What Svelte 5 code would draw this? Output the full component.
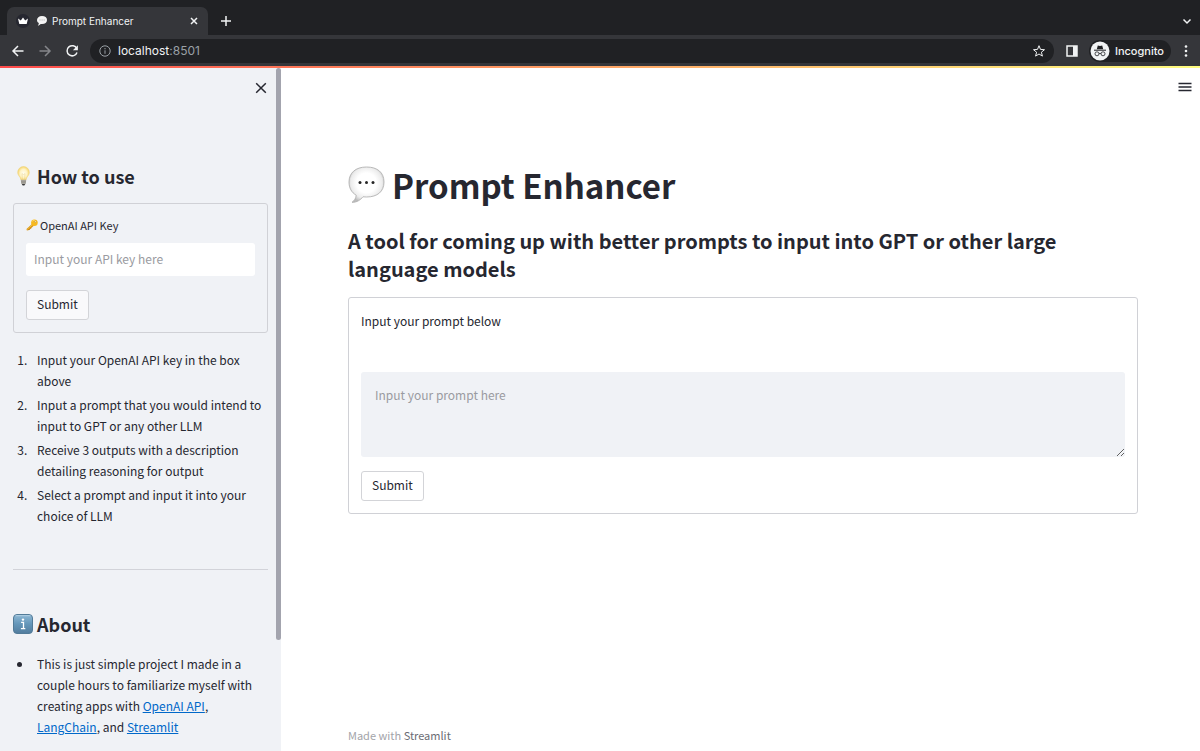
<div class="browser">
	<div class="tabs">
		<div class="tab">
			<svg class="crown" viewBox="0 0 14 14" width="14" height="14" aria-hidden="true">
				<circle cx="7" cy="7" r="7" fill="#262730" />
				<path d="M2 4.6 4.8 6.6 7 3.5 9.2 6.6 12 4.6 10.7 10H3.3z" fill="#fff" />
			</svg>
			<svg class="tab-bubble" viewBox="0 0 12 12" width="12" height="12" aria-hidden="true">
				<path
					d="M6 1C3 1 1 2.7 1 5c0 1.500.7 2.500 1.800 3.100C2.800 9.300 2.400 10 1.800 10.600 3 10.600 4 9.800 4.700 9H6c3 0 5-1.600 5-4S9 1 6 1z"
					fill="#f4f4f4"
				/>
				<path d="M3.500 5h1M5.600 5h1M7.700 5h1" stroke="#aaa" />
			</svg>
			<span>Prompt Enhancer</span>
			<button class="plain tab-close" aria-label="Close tab">
				<svg viewBox="0 0 8 8" width="8" height="8"><path d="m1 1 6 6M7 1 1 7" /></svg>
			</button>
		</div>
		<button class="plain new-tab" aria-label="New tab">
			<svg viewBox="0 0 12 12" width="12" height="12"><path d="M6 1v10M1 6h10" /></svg>
		</button>
		<button class="plain tab-search" aria-label="Search tabs">
			<svg viewBox="0 0 10 10" width="10" height="10"><path d="m1.500 3.500 3.500 3.500 3.500-3.500" /></svg>
		</button>
	</div>
	<div class="toolbar">
		<button class="plain" aria-label="Back">
			<svg viewBox="0 0 14 14" width="14" height="14"><path d="M12.500 7H2M7 2 2 7l5 5" /></svg>
		</button>
		<button class="plain dim" aria-label="Forward">
			<svg viewBox="0 0 14 14" width="14" height="14"><path d="M1.500 7H12M7 2l5 5-5 5" /></svg>
		</button>
		<button class="plain" aria-label="Reload">
			<svg viewBox="0 0 14 14" width="14" height="14">
				<path d="M11.800 4.600A5.100 5.100 0 1 0 12 8.400" />
				<path d="M12.900 1.200v5H7.900z" class="solid" />
			</svg>
		</button>
		<div class="address">
			<svg class="info" viewBox="0 0 12 12" width="12" height="12" aria-hidden="true">
				<circle cx="6" cy="6" r="5.200" /><path d="M6 5.300v3.500M6 3v1.300" />
			</svg>
			<span class="url">localhost<i>:8501</i></span>
			<button class="plain star" aria-label="Bookmark this page">
				<svg viewBox="0 0 14 14" width="14" height="14">
					<path d="m7 1.700 1.500 3.700 4 .3-3.100 2.500 1 3.900L7 10l-3.400 2.100 1-3.900-3.100-2.500 4-.3z" />
				</svg>
			</button>
		</div>
		<button class="plain" aria-label="Side panel">
			<svg viewBox="0 0 12 12" width="12" height="12">
				<path d="M1 1h10v10H1z" /><path d="M7 1h4v10H7z" class="solid" />
			</svg>
		</button>
		<button class="profile">
			<svg viewBox="0 0 20 20" width="20" height="20" aria-hidden="true">
				<circle cx="10" cy="10" r="9.500" fill="#f1f3f4" />
				<path d="M6.800 8.300 7.800 4.500 10 5.100l2.200-.6 1 3.800z" fill="#202124" />
				<path d="M4 9.200h12" stroke="#202124" />
				<g fill="none" stroke="#202124" stroke-width=".8">
					<circle cx="7" cy="12.800" r="2" />
					<circle cx="13" cy="12.800" r="2" />
					<path d="M9 12.600q1-.7 2 0" />
				</g>
			</svg>
			Incognito
		</button>
		<button class="plain dots" aria-label="Browser menu">
			<svg viewBox="0 0 4 14" width="4" height="14">
				<circle cx="2" cy="2.500" r="1.300" /><circle cx="2" cy="7" r="1.300" /><circle cx="2" cy="11.500" r="1.300" />
			</svg>
		</button>
	</div>
</div>
<div class="decoration"></div>

<div class="app">
	<aside>
		<div class="sidebar-content">
			<div class="sidebar-top">
				<button class="plain" aria-label="Close sidebar">
					<svg viewBox="0 0 12 12" width="12" height="12"><path d="m1.200 1.200 9.600 9.600M10.800 1.200l-9.600 9.600" /></svg>
				</button>
			</div>
			<h2>
				<svg viewBox="0 0 20 20" width="20" height="20" aria-hidden="true">
					<defs>
						<radialGradient id="glow">
							<stop offset="0" stop-color="#fffef2" />
							<stop offset=".6" stop-color="#fff3c4" />
							<stop offset="1" stop-color="#f6d56b" />
						</radialGradient>
					</defs>
					<path
						d="M10.500 .5a5.800 5.800 0 0 0-5.800 5.800c0 2.500 1.600 3.800 2.400 5.200.6 1 .7 2 .9 2.700h5c.2-.7.3-1.700.9-2.700.8-1.400 2.400-2.700 2.400-5.200A5.800 5.800 0 0 0 10.500 .5z"
						fill="url(#glow)"
						stroke="#efd37c"
						stroke-width=".6"
					/>
					<path d="M9.500 13.500 9 7.600l1.500.9 1.500-.9-.5 5.900" fill="none" stroke="#e6cd80" stroke-width=".4" />
					<path d="M7.800 13.700h5.400l-.4 4-1.200 1H9.400l-1.200-1z" fill="#b4b1a9" />
					<path d="M8 15.200h5M8.200 16.800h4.600" stroke="#77766f" stroke-width=".6" />
					<path d="M8.800 18h3.400l-.9 1.500H9.700z" fill="#3a3a3c" />
				</svg>
				How to use
			</h2>
			<form class="key-form" onsubmit={(e) => e.preventDefault()}>
				<label for="key">
					<svg viewBox="0 0 12 12" width="12" height="12" aria-hidden="true">
						<path d="M6.200 4.800 8 6.600 3.300 11 .9 11.500.5 9.900z" fill="#dc9614" />
						<path d="m1.300 10.300 5-4.500" stroke="#f9cf52" stroke-width=".8" />
						<path d="m3.400 10.800-.9-.9M4.800 9.500l-.9-.9" stroke="#986017" stroke-width=".7" />
						<circle cx="8.400" cy="3.700" r="3.300" fill="#f7b91f" />
						<path d="M6 2.600A3 3 0 0 1 9 1.100" fill="none" stroke="#ffe282" stroke-width=".8" />
						<circle cx="9.400" cy="2.700" r=".9" fill="#fff4cf" stroke="#b6780f" stroke-width=".4" />
					</svg>
					OpenAI API Key
				</label>
				<input id="key" type="password" placeholder="Input your API key here" bind:value={key} />
				<button class="submit">Submit</button>
			</form>
			<ol>
				{#each steps as step}
					<li>{step}</li>
				{/each}
			</ol>
			<hr />
			<h2 class="about">
				<svg viewBox="0 0 20 20" width="20" height="20" aria-hidden="true">
					<defs>
						<linearGradient id="tile" x2="0" y2="1">
							<stop offset="0" stop-color="#8fb9d5" />
							<stop offset=".5" stop-color="#6496b9" />
							<stop offset="1" stop-color="#527c9d" />
						</linearGradient>
					</defs>
					<rect x=".5" y=".5" width="19" height="19" rx="3.500" fill="url(#tile)" stroke="#527b98" />
					<path d="M3 1.700h14" stroke="#bcd7e7" stroke-width=".8" stroke-linecap="round" />
					<circle cx="10" cy="5.600" r="1.200" fill="#fff" />
					<path d="M8.100 8.300h2.400v6.200M7.900 14.700h4.400" fill="none" stroke="#fff" stroke-width="1.300" />
				</svg>
				About
			</h2>
			<ul>
				<li>
					This is just simple project I made in a couple hours to familiarize myself with creating apps with
					<a href="#openai">OpenAI API</a>, <a href="#langchain">LangChain</a>, and
					<a href="#streamlit">Streamlit</a>
				</li>
			</ul>
		</div>
		<div class="scrollbar"></div>
	</aside>

	<main>
		<header>
			<button class="plain" aria-label="Main menu">
				<svg viewBox="0 0 14 10" width="14" height="10"><path d="M.5 1.500h13M.5 5h13M.5 8.500h13" /></svg>
			</button>
		</header>
		<div class="block">
			<h1>
				<svg viewBox="0 0 37 38" width="37" height="38" aria-hidden="true">
					<defs>
						<radialGradient id="bubble" cx=".5" cy=".45" r=".56">
							<stop offset=".5" stop-color="#fff" />
							<stop offset=".8" stop-color="#ececec" />
							<stop offset="1" stop-color="#bcbcbc" />
						</radialGradient>
					</defs>
					<path
						d="M18.500 1C7.500 1 1 7 1 16c0 6 2.500 10.500 7.200 13.200C8 32.200 6.500 34.500 4 36.300c5 .2 8.500-2.500 11-5.500l3.500.2C29.500 31 36 25.500 36 16S29.500 1 18.500 1z"
						fill="url(#bubble)"
						stroke="#a9a9a9"
						stroke-width=".8"
					/>
					<g fill="#262626">
						<circle cx="12" cy="16.500" r="1.500" />
						<circle cx="18.500" cy="16.500" r="1.500" />
						<circle cx="25" cy="16.500" r="1.500" />
					</g>
				</svg>
				Prompt Enhancer
			</h1>
			<h3>A tool for coming up with better prompts to input into GPT or other large language models</h3>
			<form class="prompt-form" onsubmit={(e) => e.preventDefault()}>
				<label for="prompt">Input your prompt below</label>
				<textarea id="prompt" placeholder="Input your prompt here" bind:value={prompt}></textarea>
				<button class="submit">Submit</button>
			</form>
		</div>
		<footer>Made with <a href="#streamlit">Streamlit</a></footer>
	</main>
</div>

<script>
	let key = $state('');
	let prompt = $state('');
	const steps = [
		'Input your OpenAI API key in the box above',
		'Input a prompt that you would intend to input to GPT or any other LLM',
		'Receive 3 outputs with a description detailing reasoning for output',
		'Select a prompt and input it into your choice of LLM'
	];
</script>

<style>
	:global(body) {
		margin: 0;
		background: #fff;
	}
	:global(#app) {
		display: flex;
		flex-direction: column;
		min-height: 100vh;
	}
	* {
		box-sizing: border-box;
	}
	svg {
		display: block;
		flex: none;
	}
	button,
	input,
	textarea {
		font: inherit;
		color: inherit;
	}
	.plain {
		display: block;
		padding: 0;
		border: 0;
		background: none;
		cursor: pointer;
	}
	.plain svg {
		fill: none;
		stroke: currentColor;
		stroke-width: 1.5;
	}
	.plain .solid {
		fill: currentColor;
		stroke: none;
	}
	.browser {
		color: #f1f3f4;
		background: #202124;
		font-family: Inter, sans-serif;
		font-size: 11px;
	}
	.tabs {
		display: flex;
		align-items: center;
		height: 35px;
		padding: 7px 8px 0 7px;
	}
	.tab {
		display: flex;
		align-items: center;
		width: 201px;
		height: 28px;
		padding: 0 10px 0 9px;
		border-radius: 7px 7px 0 0;
		background: #35363a;
		font-size: 10px;
	}
	.tab-bubble {
		margin: 0 4px 0 6px;
	}
	.tab-close {
		margin-left: auto;
	}
	.new-tab {
		margin-left: 12px;
	}
	.tab-search {
		margin-left: auto;
	}
	.toolbar {
		display: flex;
		align-items: center;
		gap: 13px;
		height: 31px;
		padding: 0 12px 0 11px;
		background: #35363a;
	}
	.dim {
		color: #85868a;
	}
	.address {
		display: flex;
		flex: 1;
		align-items: center;
		height: 24px;
		margin: 0 -1px 0 -2px;
		padding: 0 8px 0 9px;
		border-radius: 12px;
		background: #202124;
		font-size: 12px;
	}
	.info {
		margin-right: 7px;
		fill: none;
		stroke: #9aa0a6;
	}
	.url i {
		color: #9aa0a6;
		font-style: normal;
	}
	.star {
		margin-left: auto;
	}
	.star svg {
		stroke-width: 1;
	}
	.profile {
		display: flex;
		align-items: center;
		gap: 5px;
		height: 22px;
		margin-left: -2px;
		padding: 0 7px 0 1px;
		border: 0;
		border-radius: 11px;
		background: #202124;
		font-weight: 500;
	}
	.dots svg {
		fill: currentColor;
		stroke: none;
	}
	.decoration {
		height: 2px;
		background: linear-gradient(90deg, #ff4b4b, #fffd80);
	}
	.app {
		display: flex;
		flex: 1;
		color: #262730;
		font-family: 'Noto Sans CJK SC', 'Noto Sans', sans-serif;
		font-size: 12px;
		line-height: 21px;
	}
	aside {
		display: flex;
		flex: none;
		width: 281px;
		background: #f0f2f6;
	}
	.sidebar-content {
		flex: 1;
		padding: 0 8px 0 13px;
	}
	.sidebar-top {
		display: flex;
		justify-content: flex-end;
		align-items: flex-start;
		height: 96px;
		padding: 14px 1px 0 0;
	}
	.scrollbar {
		width: 5px;
		height: 572px;
		border-radius: 3px;
		background: #a3a4ae;
	}
	h1,
	h2,
	h3 {
		margin: 0;
		font-weight: 700;
	}
	h2 {
		display: flex;
		align-items: center;
		gap: 4px;
		font-size: 18px;
		line-height: 24px;
	}
	form {
		display: flex;
		flex-direction: column;
		align-items: flex-start;
		padding: 12px;
		border: 1px solid #d0d1d6;
		border-radius: 3px;
	}
	.key-form {
		margin: 15px 0 16px;
	}
	.key-form label {
		display: flex;
		align-items: center;
		gap: 2px;
		margin: 1px 0 10px;
		font-size: 11px;
		line-height: 16px;
	}
	input,
	textarea {
		display: block;
		width: 100%;
		border: 0;
		border-radius: 3px;
		outline: 0;
	}
	input {
		height: 33px;
		padding: 0 8px 2px;
		background: #fff;
	}
	::placeholder {
		color: #9a9ba1;
		opacity: 1;
	}
	.submit {
		height: 30px;
		margin-top: 14px;
		padding: 0 10px 4px;
		border: 1px solid #d3d4d8;
		border-radius: 3px;
		background: #fff;
		cursor: pointer;
	}
	.key-form .submit {
		background: #f9f9fb;
	}
	ol,
	ul {
		margin: 0;
		padding: 0 0 0 17px;
	}
	li {
		margin-bottom: 3px;
		padding-left: 7px;
	}
	ul {
		padding-left: 20px;
	}
	ul li {
		padding-left: 4px;
	}
	hr {
		height: 1px;
		margin: 43px 0 42px;
		border: 0;
		background: #d2d3d9;
	}
	.about {
		margin-bottom: 17px;
	}
	ul a {
		color: #0068c9;
	}
	main {
		display: flex;
		flex: 1;
		flex-direction: column;
		min-width: 0;
	}
	header {
		display: flex;
		justify-content: flex-end;
		height: 95px;
		padding: 14px 8px 0;
		align-items: flex-start;
	}
	.block {
		padding: 0 62px 0 67px;
	}
	h1 {
		display: flex;
		align-items: center;
		gap: 7px;
		margin-bottom: 20px;
		font-size: 33px;
		line-height: 44px;
	}
	h3 {
		margin-bottom: 14px;
		font-size: 20px;
		line-height: 28px;
	}
	.prompt-form label {
		margin-bottom: 41px;
	}
	textarea {
		height: 85px;
		padding: 12px 14px;
		background: #f0f2f6;
		resize: vertical;
	}
	footer {
		margin-top: auto;
		padding: 0 67px 5px;
		color: #a3a4a9;
		font-size: 11px;
	}
	footer a {
		color: #6b6c74;
		text-decoration: none;
	}
</style>
